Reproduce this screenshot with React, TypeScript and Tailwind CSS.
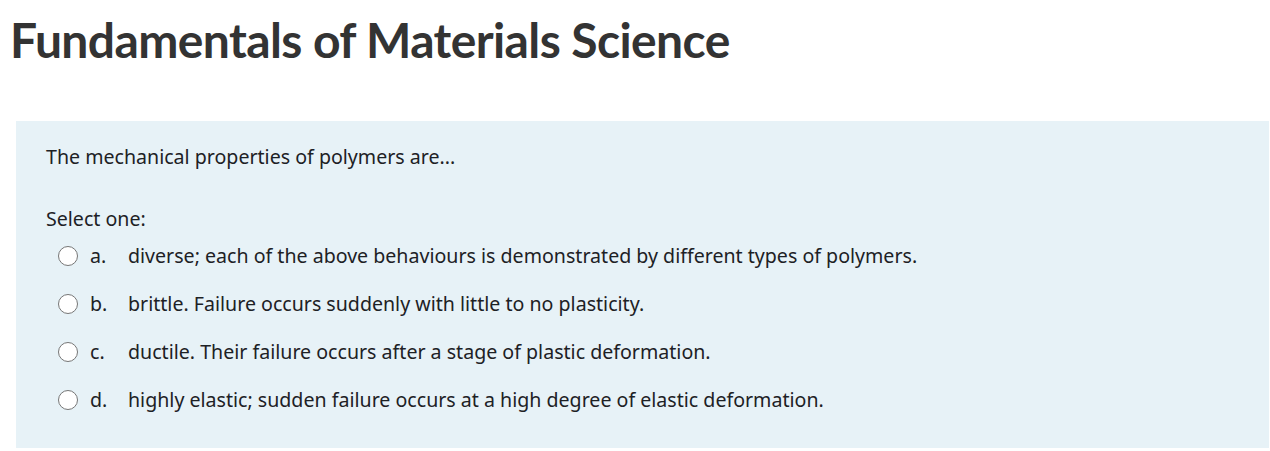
import React from "react";

const options = [
  { l: "a.", t: "diverse; each of the above behaviours is demonstrated by different types of polymers." },
  { l: "b.", t: "brittle. Failure occurs suddenly with little to no plasticity." },
  { l: "c.", t: "ductile. Their failure occurs after a stage of plastic deformation." },
  { l: "d.", t: "highly elastic; sudden failure occurs at a high degree of elastic deformation." },
];

export default function App() {
  return (
    <div className="w-[1270px] h-[451px] bg-white overflow-hidden">
      <h1
        className="pl-[10px] pt-[14px] text-[48px] leading-[52px] font-bold text-[#333333] tracking-[-0.6px]"
        style={{ fontFamily: "Lato, sans-serif" }}
      >
        Fundamentals of Materials Science
      </h1>
      <div
        className="mt-[55px] ml-[16px] mr-[1px] h-[327px] bg-[#e7f2f7] pl-[30px] pt-[22px] text-[#1d2125] text-[19.6px]"
        style={{ fontFamily: "'Noto Sans', sans-serif" }}
      >
        <p className="leading-[27px]">The mechanical properties of polymers are...</p>
        <p className="mt-[35px] leading-[27px]">Select one:</p>
        <div className="flex flex-col">
          {options.map((o, i) => (
            <div key={i} className="flex items-center h-[48px] pl-[12px]">
              <span className="w-[20px] h-[20px] rounded-full border-[1.5px] border-[#767676] bg-white shrink-0" />
              <span className="ml-[12px] w-[38px]">{o.l}</span>
              <span>{o.t}</span>
            </div>
          ))}
        </div>
      </div>
    </div>
  );
}
